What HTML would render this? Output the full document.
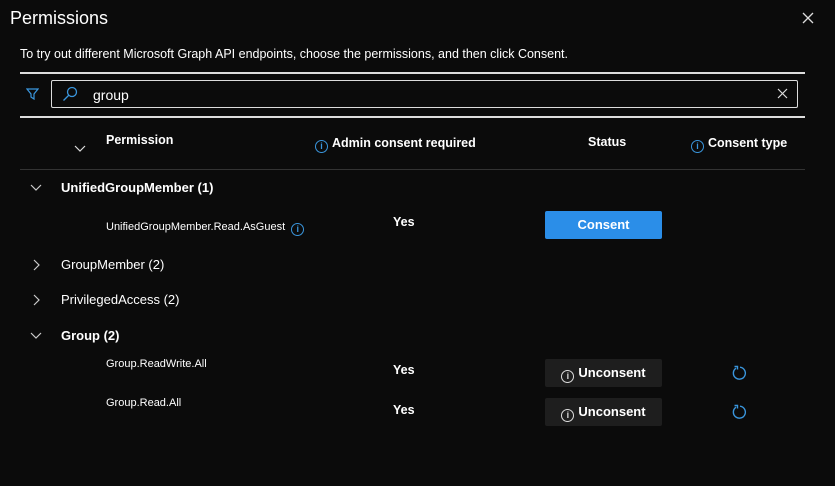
<!DOCTYPE html><html><head><style>
body{margin:0;width:835px;height:486px;background:#0b0b0b;color:#fff;font-family:"Liberation Sans",sans-serif;position:relative;overflow:hidden}
.a{position:absolute;white-space:nowrap}
.info{display:inline-block;box-sizing:border-box;width:13px;height:13px;border:1.2px solid #3a96dd;border-radius:50%;font-size:9px;line-height:11px;text-align:center;color:#3a96dd;vertical-align:-2px;font-weight:bold;margin-right:4px}
.btn{position:absolute;left:545px;width:117px;height:28px;border-radius:2px;font-size:13px;font-weight:bold;text-align:center;line-height:28px}
.un{background:#1e1e1e}
.un .info{border-color:#ddd;color:#ddd}
</style></head><body>
<div class="a" style="left:10px;top:8px;font-size:18px">Permissions</div>
<svg class="a" style="left:802px;top:12px" width="12" height="12"><path d="M1 1L11 11M11 1L1 11" stroke="#ddd" stroke-width="1.3"/></svg>
<div class="a" style="left:20px;top:47px;font-size:12.5px">To try out different Microsoft Graph API endpoints, choose the permissions, and then click Consent.</div>
<div class="a" style="left:20px;top:72px;width:785px;height:2px;background:#ddd"></div>
<svg class="a" style="left:26px;top:88px" width="13" height="12"><path d="M1 1H12L8 6V11L5 9V6Z" fill="none" stroke="#3a96dd" stroke-width="1.2"/></svg>
<div class="a" style="left:51px;top:80px;width:745px;height:26px;border:1.5px solid #ddd;border-radius:2px"></div>
<svg class="a" style="left:62px;top:86px" width="16" height="16"><circle cx="10" cy="6" r="4.5" fill="none" stroke="#3a96dd" stroke-width="1.3"/><path d="M7 9L1.5 14.5" stroke="#3a96dd" stroke-width="1.3"/></svg>
<div class="a" style="left:93px;top:87px;font-size:14px">group</div>
<svg class="a" style="left:777px;top:88px" width="11" height="11"><path d="M1 1L10 10M10 1L1 10" stroke="#ddd" stroke-width="1.2"/></svg>
<div class="a" style="left:20px;top:116px;width:785px;height:2px;background:#ddd"></div>
<svg class="a" style="left:74px;top:145px" width="12" height="8"><path d="M1 1L6 6L11 1" fill="none" stroke="#ddd" stroke-width="1.2"/></svg>
<div class="a" style="left:106px;top:133px;font-size:12.5px;font-weight:bold">Permission</div>
<div class="a" style="left:315px;top:136px;font-size:12.5px;font-weight:bold"><span class="info">i</span>Admin consent required</div>
<div class="a" style="left:588px;top:135px;font-size:12.5px;font-weight:bold">Status</div>
<div class="a" style="left:691px;top:136px;font-size:12.5px;font-weight:bold"><span class="info">i</span>Consent type</div>
<div class="a" style="left:20px;top:169px;width:785px;height:1px;background:#333"></div>
<svg class="a" style="left:30px;top:184px" width="12" height="8"><path d="M1 1L6 6L11 1" fill="none" stroke="#ccc" stroke-width="1.2"/></svg>
<div class="a" style="left:61px;top:180px;font-size:13px;font-weight:bold">UnifiedGroupMember (1)</div>
<div class="a" style="left:106px;top:221px;font-size:11px">UnifiedGroupMember.Read.AsGuest &nbsp;<span class="info">i</span></div>
<div class="a" style="left:393px;top:215px;font-size:12.5px;font-weight:bold">Yes</div>
<div class="btn" style="top:211px;background:#2b8ee8">Consent</div>
<svg class="a" style="left:33px;top:259px" width="8" height="12"><path d="M1 1L6 6L1 11" fill="none" stroke="#ccc" stroke-width="1.2"/></svg>
<div class="a" style="left:61px;top:257px;font-size:13px">GroupMember (2)</div>
<svg class="a" style="left:33px;top:294px" width="8" height="12"><path d="M1 1L6 6L1 11" fill="none" stroke="#ccc" stroke-width="1.2"/></svg>
<div class="a" style="left:61px;top:292px;font-size:13px">PrivilegedAccess (2)</div>
<svg class="a" style="left:30px;top:332px" width="12" height="8"><path d="M1 1L6 6L11 1" fill="none" stroke="#ccc" stroke-width="1.2"/></svg>
<div class="a" style="left:61px;top:328px;font-size:13px;font-weight:bold">Group (2)</div>
<div class="a" style="left:106px;top:358px;font-size:11px">Group.ReadWrite.All</div>
<div class="a" style="left:393px;top:363px;font-size:12.5px;font-weight:bold">Yes</div>
<div class="btn un" style="top:359px"><span class="info">i</span>Unconsent</div>
<svg class="a" style="left:731px;top:365px" width="16" height="16"><path d="M5 3.2A6 6 0 1 0 9 2.2" fill="none" stroke="#3a96dd" stroke-width="1.4"/><path d="M3.5 1.5H6.5V4.5" fill="none" stroke="#3a96dd" stroke-width="1.4"/></svg>
<div class="a" style="left:106px;top:397px;font-size:11px">Group.Read.All</div>
<div class="a" style="left:393px;top:403px;font-size:12.5px;font-weight:bold">Yes</div>
<div class="btn un" style="top:398px"><span class="info">i</span>Unconsent</div>
<svg class="a" style="left:731px;top:404px" width="16" height="16"><path d="M5 3.2A6 6 0 1 0 9 2.2" fill="none" stroke="#3a96dd" stroke-width="1.4"/><path d="M3.5 1.5H6.5V4.5" fill="none" stroke="#3a96dd" stroke-width="1.4"/></svg>
</body></html>
